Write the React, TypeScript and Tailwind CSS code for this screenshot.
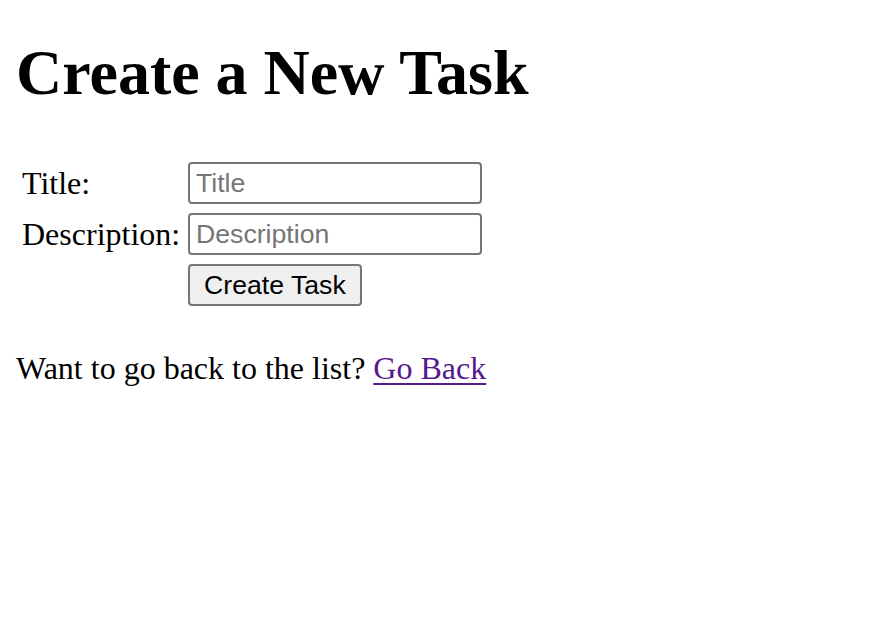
import React, { useState } from 'react';

const App: React.FC = () => {
    const [title, setTitle] = useState('');
    const [description, setDescription] = useState('');

    const handleSubmit = (e: React.FormEvent) => {
        e.preventDefault();
    };

    return (
        <div className="min-h-screen bg-white px-4 pt-px text-black font-['Liberation_Serif',serif]">
            <h1 className="mt-[24px] mb-[41px] text-[64px] font-bold leading-normal">Create a New Task</h1>

            {/* Form */}
            <form onSubmit={handleSubmit} className="grid grid-cols-[166px_294px] gap-y-[9px] pl-[6px] text-[32px] leading-normal">
                <label htmlFor="title" className="flex items-center h-[42px]">Title:</label>
                <input
                    id="title"
                    type="text"
                    value={title}
                    onChange={(e) => setTitle(e.target.value)}
                    placeholder="Title"
                    className="block h-[42px] w-[294px] px-[6px] border-2 border-[#767676] rounded-[4px] bg-white text-[26.67px] font-['Liberation_Sans',Arial,sans-serif] text-black placeholder:text-[#757575] outline-none"
                />

                <label htmlFor="description" className="flex items-center h-[42px]">Description:</label>
                <input
                    id="description"
                    type="text"
                    value={description}
                    onChange={(e) => setDescription(e.target.value)}
                    placeholder="Description"
                    className="block h-[42px] w-[294px] px-[6px] border-2 border-[#767676] rounded-[4px] bg-white text-[26.67px] font-['Liberation_Sans',Arial,sans-serif] text-black placeholder:text-[#757575] outline-none"
                />

                <div />
                <div className="flex">
                    <button
                        type="submit"
                        className="block h-[42px] px-[14px] border-2 border-[#767676] rounded-[4px] bg-[#efefef] text-[26.67px] leading-none font-['Liberation_Sans',Arial,sans-serif] text-black"
                    >
                        Create Task
                    </button>
                </div>
            </form>

            <p className="mt-[38px] text-[32px] leading-normal">
                Want to go back to the list?{' '}
                <a href="#" className="text-[#551a8b] underline decoration-2 underline-offset-[4px]">Go Back</a>
            </p>
        </div>
    );
};

export default App;
